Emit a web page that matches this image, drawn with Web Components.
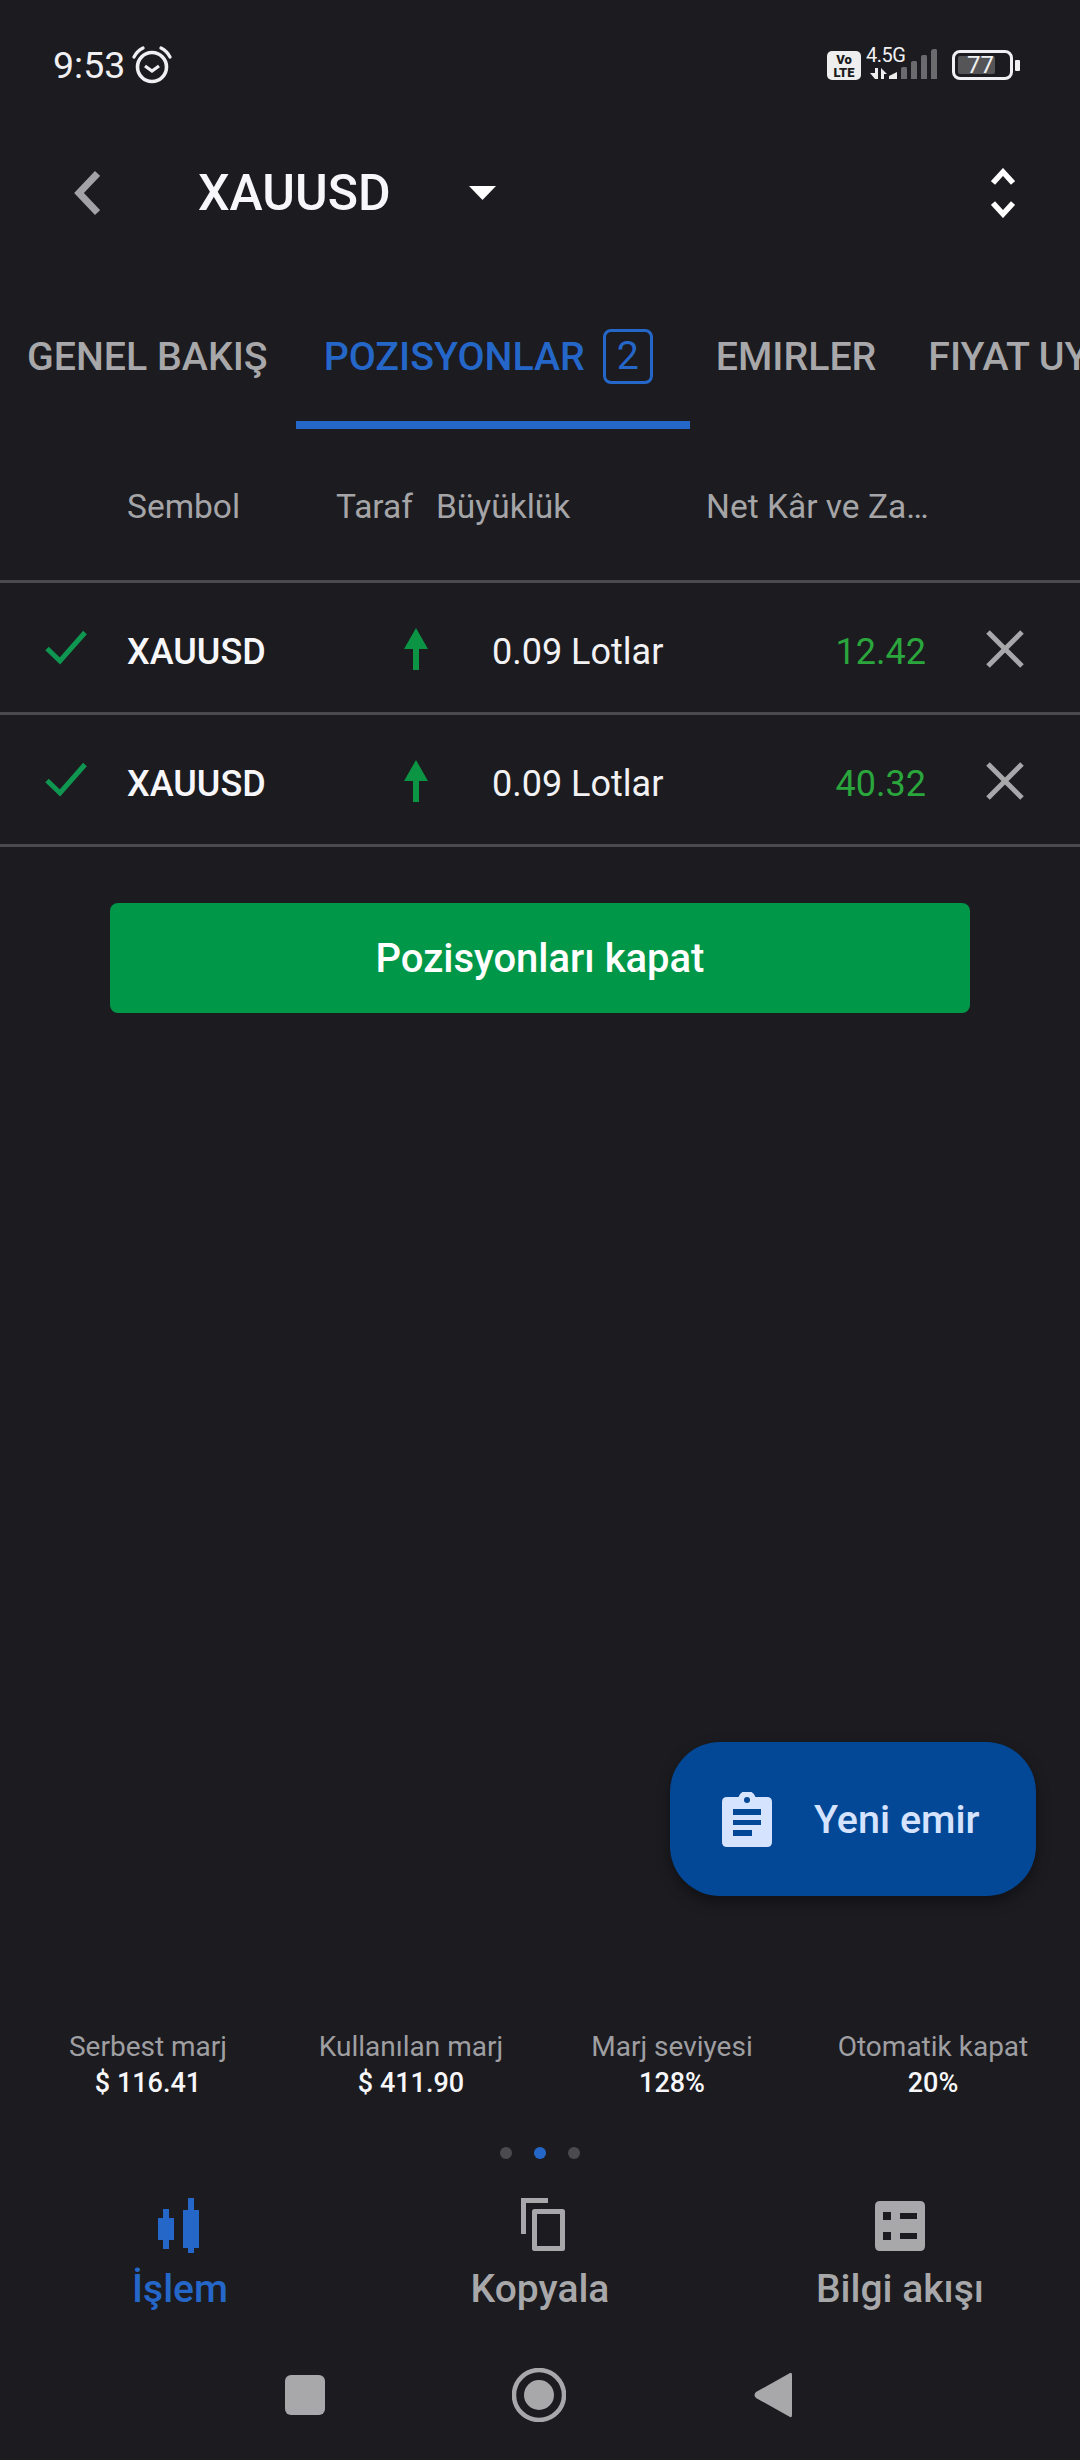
<!DOCTYPE html>
<html lang="tr">
<head>
<meta charset="utf-8">
<title>XAUUSD</title>
<style>
    html, body { margin: 0; padding: 0; background: #1b1b20; }
    body { font-family: Roboto, "Noto Sans", sans-serif; }
</style>
</head>
<body>
<trade-screen>
    <status-bar></status-bar>
    <app-toolbar symbol="XAUUSD"></app-toolbar>
    <tab-strip>
        <tab-item style="--pad-left:27px;--pad-right:28px">GENEL BAKIŞ</tab-item>
        <tab-item active count="2" style="--pad-left:28px;--pad-right:37px">POZISYONLAR</tab-item>
        <tab-item style="--pad-left:26px;--pad-right:28px">EMIRLER</tab-item>
        <tab-item style="--pad-left:24px;--pad-right:0px">FIYAT UY</tab-item>
    </tab-strip>
    <positions-header></positions-header>
    <position-row symbol="XAUUSD" size="0.09 Lotlar" pnl="12.42"></position-row>
    <position-row symbol="XAUUSD" size="0.09 Lotlar" pnl="40.32"></position-row>
    <close-button>Pozisyonları kapat</close-button>
    <new-order-fab>Yeni emir</new-order-fab>
    <margin-stats>
        <stat-item label="Serbest marj" value="$ 116.41"></stat-item>
        <stat-item label="Kullanılan marj" value="$ 411.90"></stat-item>
        <stat-item label="Marj seviyesi" value="128%"></stat-item>
        <stat-item label="Otomatik kapat" value="20%"></stat-item>
    </margin-stats>
    <page-dots></page-dots>
    <bottom-nav></bottom-nav>
    <system-nav></system-nav>
</trade-screen>

<script>
class TradeScreen extends HTMLElement {
    constructor() {
        super();
        this.attachShadow({ mode: 'open' });
        this.shadowRoot.innerHTML = `
            <style>
                :host {
                    display: flex;
                    flex-direction: column;
                    position: relative;
                    width: 1080px;
                    height: 2460px;
                    overflow: hidden;
                    background: #1b1b20;
                    color: #fff;
                    font-family: Roboto, "Noto Sans", sans-serif;
                }
            </style>
            <slot></slot>
        `;
    }
}

class StatusBar extends HTMLElement {
    constructor() {
        super();
        this.attachShadow({ mode: 'open' });
        this.shadowRoot.innerHTML = `
            <style>
                :host {
                    display: flex;
                    align-items: center;
                    height: 130px;
                    padding: 0 60px 0 53px;
                    color: #f0f0f2;
                }
                .time { font-size: 37.500px; line-height: 40px; margin-right: 7px; }
                .spacer { flex: 1; }
                .volte {
                    width: 34px;
                    height: 29px;
                    border-radius: 5px;
                    background: #eeeeee;
                    color: #1b1b20;
                    font-size: 13px;
                    line-height: 13px;
                    font-weight: 900;
                    text-align: center;
                    padding-top: 2px;
                    box-sizing: border-box;
                    margin-right: 5px;
                }
                .net { position: relative; width: 72px; height: 34px; margin-right: 14px; }
                .net span {
                    position: absolute;
                    left: 0;
                    top: -3px;
                    font-size: 20px;
                    line-height: 20px;
                    letter-spacing: -0.5px;
                }
                .net svg { position: absolute; left: 0; top: 0; }
                .battery {
                    position: relative;
                    width: 61px;
                    height: 30px;
                    box-sizing: border-box;
                    border: 3px solid #f0f0f2;
                    border-radius: 8px;
                    margin-right: 2px;
                    font-size: 24px;
                    line-height: 24px;
                    text-align: center;
                }
                .level {
                    position: absolute;
                    left: 3px;
                    top: 3px;
                    bottom: 3px;
                    width: 37px;
                    background: #555558;
                    border-radius: 2px;
                }
                .battery span { position: relative; display: block; margin-left: -4px; }
                .nub { width: 5px; height: 11px; background: #f0f0f2; border-radius: 1px; }
            </style>
            <span class="time">9:53</span>
            <svg width="40" height="38" viewBox="0 0 40 38" fill="none" stroke="#f0f0f2">
                <circle cx="20" cy="21" r="14.5" stroke-width="3.6"/>
                <path d="M13 20l7 5 7-5" stroke-width="3.2"/>
                <path d="M2 11C4 7 7 4 11 2" stroke-width="3.2" stroke-linecap="round"/>
                <path d="M38 11C36 7 33 4 29 2" stroke-width="3.2" stroke-linecap="round"/>
            </svg>
            <span class="spacer"></span>
            <div class="volte">Vo<br>LTE</div>
            <div class="net">
                <span>4.5G</span>
                <svg width="72" height="34" viewBox="0 0 72 34">
                    <path d="M9 20h3v11H9l-5-6h5zM15 20l6 6h-3v5h-3z" fill="#eeeeee"/>
                    <path d="M23 31v-3l8-4v7z" fill="#eeeeee"/>
                    <path d="M35 31V21q0-2 2-2h3q1 0 1 2v10zM45 31V15q0-2 2-2h3q1 0 1 2v16zM55 31V9q0-2 2-2h3q1 0 1 2v22zM65 31V4q0-3 3-3h2q1 0 1 2v28z" fill="#6b6b6e"/>
                </svg>
            </div>
            <div class="battery"><div class="level"></div><span>77</span></div>
            <div class="nub"></div>
        `;
    }
}

class AppToolbar extends HTMLElement {
    constructor() {
        super();
        this.attachShadow({ mode: 'open' });
        this.shadowRoot.innerHTML = `
            <style>
                :host {
                    display: flex;
                    align-items: center;
                    height: 126px;
                    padding: 0 65px 0 74px;
                }
                .back { margin-right: 98px; }
                .symbol { font-size: 50px; line-height: 60px; font-weight: 500; color: #f7f7fa; margin-right: 78px; }
                .spacer { flex: 1; }
            </style>
            <svg class="back" width="26" height="44" viewBox="0 0 26 44" fill="none" stroke="#a3a3a5" stroke-width="7">
                <path d="M23.5 2.5 5 22l18.5 19.5"/>
            </svg>
            <span class="symbol">${this.getAttribute('symbol')}</span>
            <svg width="27" height="14" viewBox="0 0 27 14"><path d="M0 0h27L13.500 14z" fill="#fff"/></svg>
            <span class="spacer"></span>
            <svg width="24" height="50" viewBox="0 0 24 50" fill="none" stroke="#fff" stroke-width="5.500">
                <path d="M2 15 12 4l10 11M2 35l10 11 10-11"/>
            </svg>
        `;
    }
}

class TabStrip extends HTMLElement {
    constructor() {
        super();
        this.attachShadow({ mode: 'open' });
        this.shadowRoot.innerHTML = `
            <style>
                :host {
                    display: flex;
                    height: 173px;
                    overflow: hidden;
                    white-space: nowrap;
                }
            </style>
            <slot></slot>
        `;
    }
}

class TabItem extends HTMLElement {
    constructor() {
        super();
        this.attachShadow({ mode: 'open' });
        const count = this.getAttribute('count');
        this.shadowRoot.innerHTML = `
            <style>
                :host {
                    display: flex;
                    flex: none;
                    align-items: center;
                    box-sizing: border-box;
                    height: 173px;
                    padding: 29px var(--pad-right) 0 var(--pad-left);
                    font-size: 39.300px;
                    font-weight: 500;
                    color: #a8a8aa;
                }
                :host([active]) {
                    color: #2567c9;
                    border-bottom: 8px solid #2567c9;
                    padding-top: 37px;
                }
                .count {
                    display: flex;
                    align-items: center;
                    justify-content: center;
                    box-sizing: border-box;
                    width: 50px;
                    height: 55px;
                    margin-left: 18px;
                    margin-top: -2px;
                    border: 3px solid #2567c9;
                    border-radius: 8px;
                    font-weight: 400;
                }
            </style>
            <slot></slot>
            ${count ? `<span class="count">${count}</span>` : ''}
        `;
    }
}

class PositionsHeader extends HTMLElement {
    constructor() {
        super();
        this.attachShadow({ mode: 'open' });
        this.shadowRoot.innerHTML = `
            <style>
                :host {
                    display: grid;
                    grid-template-columns: 209px 100px 270px 1fr;
                    align-items: center;
                    box-sizing: border-box;
                    height: 154px;
                    padding: 4px 0 0 127px;
                    border-bottom: 3px solid #4a4a4f;
                    font-size: 33.500px;
                    color: #a5a5a8;
                    white-space: nowrap;
                }
            </style>
            <span>Sembol</span>
            <span>Taraf</span>
            <span>Büyüklük</span>
            <span>Net Kâr ve Za…</span>
        `;
    }
}

class PositionRow extends HTMLElement {
    constructor() {
        super();
        this.attachShadow({ mode: 'open' });
        this.shadowRoot.innerHTML = `
            <style>
                :host {
                    display: grid;
                    grid-template-columns: 82px 256.500px 64px 1fr auto 154px;
                    align-items: center;
                    box-sizing: border-box;
                    height: 132px;
                    padding: 9px 0 0 45px;
                    border-bottom: 3px solid #4a4a4f;
                    font-size: 36px;
                }
                svg { display: block; }
                .check { margin-top: -8px; }
                .symbol { font-weight: 500; color: #f7f7fa; }
                .side { justify-self: center; margin-top: -6px; }
                .size { padding-left: 44.500px; color: #f2f2f4; }
                .pnl { color: #2aa63c; }
                .close { margin-left: 60px; margin-top: -6px; }
            </style>
            <svg class="check" width="42" height="36" viewBox="0 0 42 36" fill="none" stroke="#0f9650" stroke-width="5">
                <path d="M2 18.500 15 31 40 2.500"/>
            </svg>
            <span class="symbol">${this.getAttribute('symbol')}</span>
            <svg class="side" width="24" height="42" viewBox="0 0 24 42">
                <path d="M12 0 24 21h-9v21H9V21H0z" fill="#0b9444"/>
            </svg>
            <span class="size">${this.getAttribute('size')}</span>
            <span class="pnl">${this.getAttribute('pnl')}</span>
            <svg class="close" width="38" height="38" viewBox="0 0 38 38" fill="none" stroke="#a8a8aa" stroke-width="5">
                <path d="M2 2l34 34M36 2 2 36"/>
            </svg>
        `;
    }
}

class CloseButton extends HTMLElement {
    constructor() {
        super();
        this.attachShadow({ mode: 'open' });
        this.shadowRoot.innerHTML = `
            <style>
                :host {
                    display: flex;
                    align-items: center;
                    justify-content: center;
                    height: 110px;
                    margin: 56px 110px 0;
                    border-radius: 8px;
                    background: #009848;
                    color: #fff;
                    font-size: 40px;
                    font-weight: 500;
                }
            </style>
            <slot></slot>
        `;
    }
}

class NewOrderFab extends HTMLElement {
    constructor() {
        super();
        this.attachShadow({ mode: 'open' });
        this.shadowRoot.innerHTML = `
            <style>
                :host {
                    position: absolute;
                    left: 670px;
                    top: 1742px;
                    display: flex;
                    align-items: center;
                    box-sizing: border-box;
                    width: 366px;
                    height: 154px;
                    padding-left: 52px;
                    border-radius: 50px;
                    background: #034896;
                    box-shadow: 0 6px 14px rgba(0, 0, 0, 0.35);
                    color: #d6e3ff;
                    font-size: 39.500px;
                    font-weight: 500;
                }
                svg { margin-right: 42px; }
            </style>
            <svg width="50" height="55" viewBox="0 0 50 55">
                <path d="M5 5h11.500a9 9 0 0 1 17 0H45q5 0 5 5v40q0 5-5 5H5q-5 0-5-5V10q0-5 5-5z" fill="#d6e3ff"/>
                <circle cx="25" cy="8" r="3" fill="#034896"/>
                <path d="M11 17h28v6H11zM11 28h28v5H11zM11 38h19v6H11z" fill="#034896"/>
            </svg>
            <slot></slot>
        `;
    }
}

class MarginStats extends HTMLElement {
    constructor() {
        super();
        this.attachShadow({ mode: 'open' });
        this.shadowRoot.innerHTML = `
            <style>
                :host {
                    display: grid;
                    grid-template-columns: 264px 262px 260px 262px;
                    justify-content: center;
                    margin-top: auto;
                }
            </style>
            <slot></slot>
        `;
    }
}

class StatItem extends HTMLElement {
    constructor() {
        super();
        this.attachShadow({ mode: 'open' });
        this.shadowRoot.innerHTML = `
            <style>
                :host {
                    display: flex;
                    flex-direction: column;
                    align-items: center;
                    white-space: nowrap;
                }
                .label { font-size: 28px; line-height: 37px; color: #9f9fa2; }
                .value { font-size: 27px; line-height: 37px; font-weight: 500; color: #f7f7fa; }
            </style>
            <span class="label">${this.getAttribute('label')}</span>
            <span class="value">${this.getAttribute('value')}</span>
        `;
    }
}

class PageDots extends HTMLElement {
    constructor() {
        super();
        this.attachShadow({ mode: 'open' });
        this.shadowRoot.innerHTML = `
            <style>
                :host {
                    display: flex;
                    justify-content: center;
                    gap: 22px;
                    margin-top: 45px;
                }
                i { width: 12px; height: 12px; border-radius: 50%; background: #4a4a4f; }
                i.on { background: #2567c9; }
            </style>
            <i></i><i class="on"></i><i></i>
        `;
    }
}

class BottomNav extends HTMLElement {
    constructor() {
        super();
        this.attachShadow({ mode: 'open' });
        this.shadowRoot.innerHTML = `
            <style>
                :host {
                    display: grid;
                    grid-template-columns: repeat(3, 360px);
                    margin-top: 39px;
                    font-size: 39px;
                    font-weight: 500;
                    color: #a8a8aa;
                }
                .item {
                    display: flex;
                    flex-direction: column;
                    align-items: center;
                    gap: 12px;
                }
                .icon { height: 55px; display: flex; align-items: flex-end; }
                .text { line-height: 48px; }
                .active { color: #2567c9; }
            </style>
            <div class="item active">
                <div class="icon">
                    <svg width="42" height="55" viewBox="0 0 42 55" fill="#2567c9" style="margin-right:4px">
                        <path d="M6 11h6v9h5v22h-5v9H6v-9H1V20h5zM31 0h6v12h5v38h-5v5h-6v-5h-5V12h5z"/>
                    </svg>
                </div>
                <span class="text">İşlem</span>
            </div>
            <div class="item">
                <div class="icon">
                    <svg width="44" height="53" viewBox="0 0 44 53" fill="none" stroke="#a8a8aa" stroke-width="5" style="margin:0 0 2px 6px">
                        <path d="M2.500 36V2.500H27"/>
                        <rect x="13.500" y="13.500" width="28" height="37" stroke-linejoin="round"/>
                    </svg>
                </div>
                <span class="text">Kopyala</span>
            </div>
            <div class="item">
                <div class="icon">
                    <svg width="50" height="50" viewBox="0 0 50 50" style="margin-bottom:2px">
                        <path fill-rule="evenodd" fill="#a8a8aa" d="M5 0h40q5 0 5 5v40q0 5-5 5H5q-5 0-5-5V5q0-5 5-5zM8 11v8h8v-8zM8 31v8h8v-8zM25 12v6h17v-6zM25 32v6h17v-6z"/>
                    </svg>
                </div>
                <span class="text">Bilgi akışı</span>
            </div>
        `;
    }
}

class SystemNav extends HTMLElement {
    constructor() {
        super();
        this.attachShadow({ mode: 'open' });
        this.shadowRoot.innerHTML = `
            <style>
                :host {
                    display: grid;
                    grid-template-columns: 285px 40px 187px 54px 1fr;
                    grid-template-rows: 46px;
                    align-items: center;
                    height: 46px;
                    margin-top: 59px;
                    margin-bottom: 42px;
                }
                svg { display: block; grid-row: 1; }
            </style>
            <svg style="grid-column:2" width="40" height="40" viewBox="0 0 40 40">
                <rect width="40" height="40" rx="6" fill="#a8a8aa"/>
            </svg>
            <svg style="grid-column:4" width="54" height="54" viewBox="0 0 54 54">
                <circle cx="27" cy="27" r="25" fill="none" stroke="#a8a8aa" stroke-width="4.500"/>
                <circle cx="27" cy="27" r="15" fill="#a8a8aa"/>
            </svg>
            <svg style="grid-column:5;margin-left:188px" width="38" height="46" viewBox="0 0 38 46">
                <path d="M36 1q2-1 2 2v40q0 3-2 2L2 26q-3-3 0-6z" fill="#a8a8aa"/>
            </svg>
        `;
    }
}

customElements.define('trade-screen', TradeScreen);
customElements.define('status-bar', StatusBar);
customElements.define('app-toolbar', AppToolbar);
customElements.define('tab-strip', TabStrip);
customElements.define('tab-item', TabItem);
customElements.define('positions-header', PositionsHeader);
customElements.define('position-row', PositionRow);
customElements.define('close-button', CloseButton);
customElements.define('new-order-fab', NewOrderFab);
customElements.define('margin-stats', MarginStats);
customElements.define('stat-item', StatItem);
customElements.define('page-dots', PageDots);
customElements.define('bottom-nav', BottomNav);
customElements.define('system-nav', SystemNav);
</script>
</body>
</html>
